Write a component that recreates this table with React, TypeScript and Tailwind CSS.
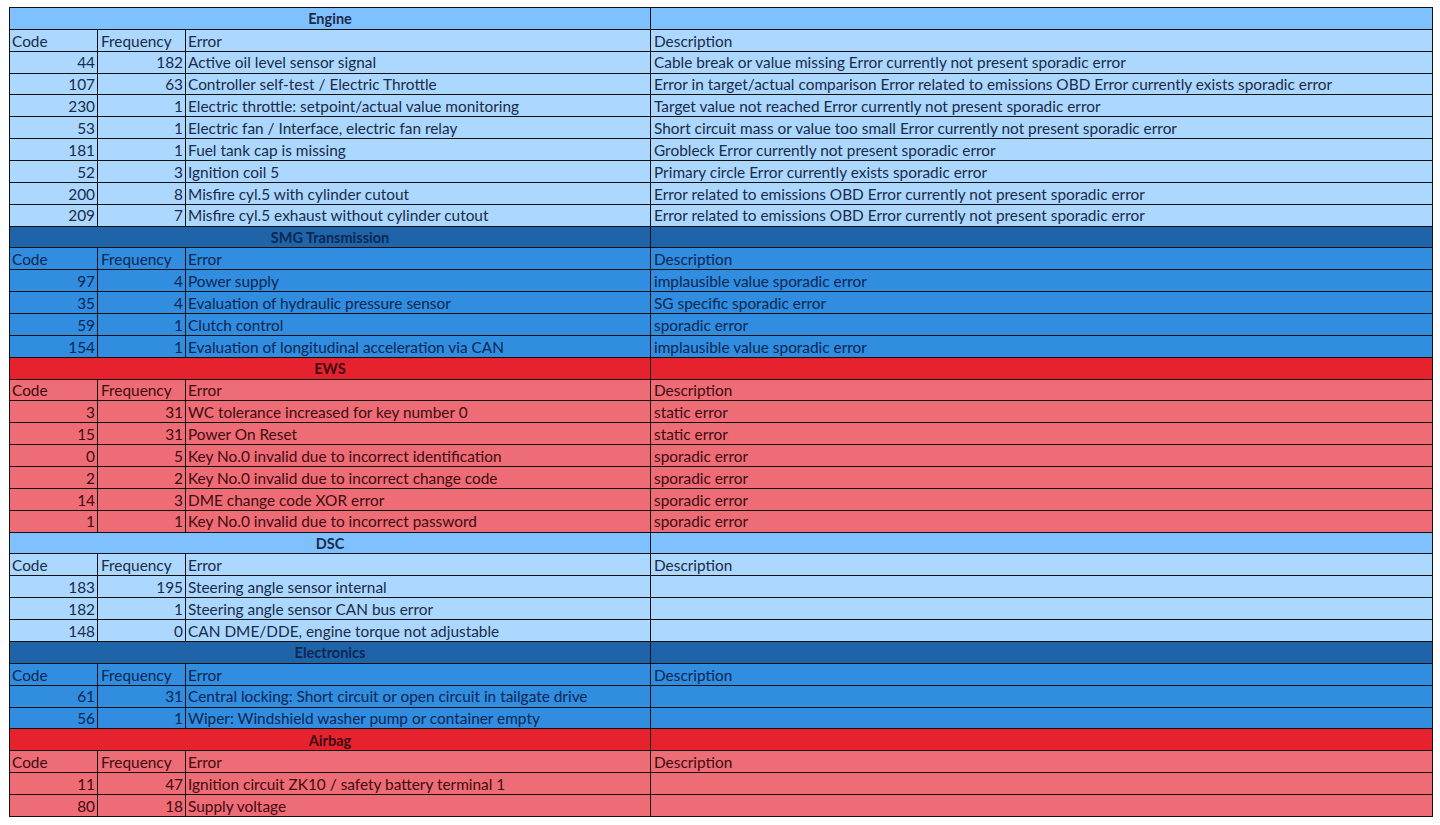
import React from "react";

type Row = [string, string, string, string];
type Theme = "light" | "dark" | "red";

const themes: Record<Theme, { title: string; row: string; text: string }> = {
  light: { title: "bg-[#7fc1ff]", row: "bg-[#acd8ff]", text: "text-[#1b2b48]" },
  dark: { title: "bg-[#1f64a9]", row: "bg-[#318de0]", text: "text-[#0b2752]" },
  red: { title: "bg-[#e6222f]", row: "bg-[#ee6c76]", text: "text-[#3f0b10]" },
};

const sections: { name: string; theme: Theme; rows: Row[] }[] = [
  {
    name: "Engine",
    theme: "light",
    rows: [
      ["44", "182", "Active oil level sensor signal", "Cable break or value missing Error currently not present sporadic error"],
      ["107", "63", "Controller self-test / Electric Throttle", "Error in target/actual comparison Error related to emissions OBD Error currently exists sporadic error"],
      ["230", "1", "Electric throttle: setpoint/actual value monitoring", "Target value not reached Error currently not present sporadic error"],
      ["53", "1", "Electric fan / Interface, electric fan relay", "Short circuit mass or value too small Error currently not present sporadic error"],
      ["181", "1", "Fuel tank cap is missing", "Grobleck Error currently not present sporadic error"],
      ["52", "3", "Ignition coil 5", "Primary circle Error currently exists sporadic error"],
      ["200", "8", "Misfire cyl.5 with cylinder cutout", "Error related to emissions OBD Error currently not present sporadic error"],
      ["209", "7", "Misfire cyl.5 exhaust without cylinder cutout", "Error related to emissions OBD Error currently not present sporadic error"],
    ],
  },
  {
    name: "SMG Transmission",
    theme: "dark",
    rows: [
      ["97", "4", "Power supply", "implausible value sporadic error"],
      ["35", "4", "Evaluation of hydraulic pressure sensor", "SG specific sporadic error"],
      ["59", "1", "Clutch control", "sporadic error"],
      ["154", "1", "Evaluation of longitudinal acceleration via CAN", "implausible value sporadic error"],
    ],
  },
  {
    name: "EWS",
    theme: "red",
    rows: [
      ["3", "31", "WC tolerance increased for key number 0", "static error"],
      ["15", "31", "Power On Reset", "static error"],
      ["0", "5", "Key No.0 invalid due to incorrect identification", "sporadic error"],
      ["2", "2", "Key No.0 invalid due to incorrect change code", "sporadic error"],
      ["14", "3", "DME change code XOR error", "sporadic error"],
      ["1", "1", "Key No.0 invalid due to incorrect password", "sporadic error"],
    ],
  },
  {
    name: "DSC",
    theme: "light",
    rows: [
      ["183", "195", "Steering angle sensor internal", ""],
      ["182", "1", "Steering angle sensor CAN bus error", ""],
      ["148", "0", "CAN DME/DDE, engine torque not adjustable", ""],
    ],
  },
  {
    name: "Electronics",
    theme: "dark",
    rows: [
      ["61", "31", "Central locking: Short circuit or open circuit in tailgate drive", ""],
      ["56", "1", "Wiper: Windshield washer pump or container empty", ""],
    ],
  },
  {
    name: "Airbag",
    theme: "red",
    rows: [
      ["11", "47", "Ignition circuit ZK10 / safety battery terminal 1", ""],
      ["80", "18", "Supply voltage", ""],
    ],
  },
];

function Section({ name, theme, rows }: { name: string; theme: Theme; rows: Row[] }) {
  const t = themes[theme];
  const rowCls = `flex h-[21.86px] border-b border-[#111] pt-[2px] ${t.text}`;
  const cell = "border-r border-[#111] -mt-[2px] pt-[2px] flex items-center overflow-hidden whitespace-nowrap";
  return (
    <>
      <div className={`${rowCls} ${t.title}`}>
        <div className={`${cell} w-[641px] justify-center font-bold text-[14.5px]`}>{name}</div>
        <div className="flex-1" />
      </div>
      <div className={`${rowCls} ${t.row}`}>
        <div className={`${cell} w-[88px] pl-[2px]`}>Code</div>
        <div className={`${cell} w-[88px] pl-[3px]`}>Frequency</div>
        <div className={`${cell} w-[465px] pl-[2px]`}>Error</div>
        <div className="flex flex-1 items-center pl-[3px]">Description</div>
      </div>
      {rows.map((r, i) => (
        <div key={i} className={`${rowCls} ${t.row}`}>
          <div className={`${cell} w-[88px] justify-end pr-[2px]`}>{r[0]}</div>
          <div className={`${cell} w-[88px] justify-end pr-[2px]`}>{r[1]}</div>
          <div className={`${cell} w-[465px] pl-[2px]`}>{r[2]}</div>
          <div className="flex flex-1 items-center overflow-hidden whitespace-nowrap pl-[3px]">{r[3]}</div>
        </div>
      ))}
    </>
  );
}

export default function App() {
  return (
    <div className="h-[825px] w-[1440px] bg-white pt-[7px] pl-[9px]" style={{ fontFamily: "Lato, 'Open Sans', sans-serif" }}>
      <div className="w-[1424px] border-t border-l border-r border-[#111] text-[15.4px] leading-none">
        {sections.map((s) => (
          <Section key={s.name} {...s} />
        ))}
      </div>
    </div>
  );
}
